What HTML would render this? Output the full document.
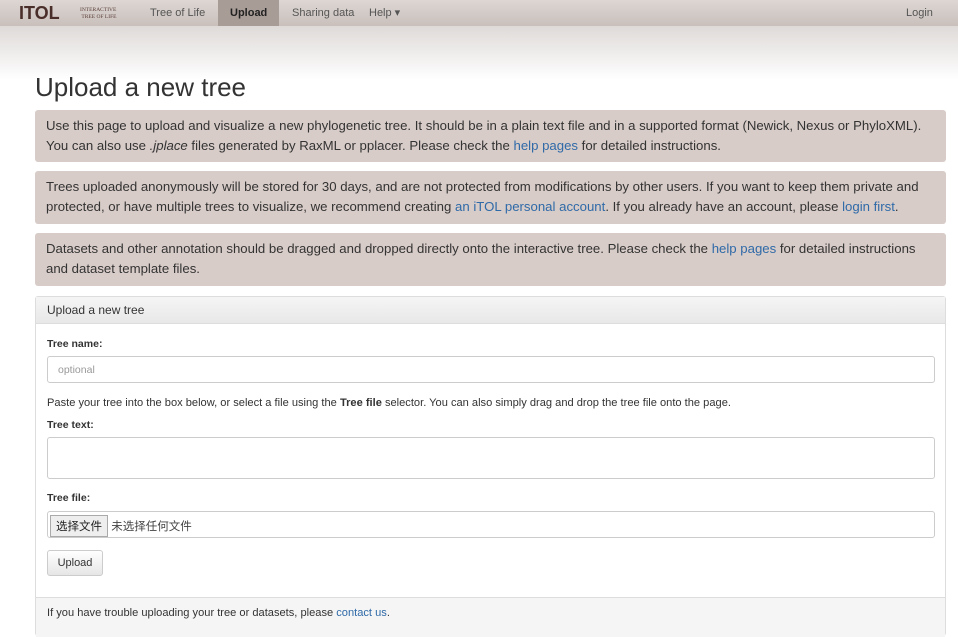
<!DOCTYPE html>
<html style="background:#fff"><head><meta charset="utf-8"><style>
*{box-sizing:border-box}
body{margin:0;width:958px;height:627px;overflow:hidden;font-family:"Liberation Sans","Noto Sans CJK SC",sans-serif;color:#333;background:linear-gradient(#dedad8 26px,#ffffff 80px,#fff);}
.nav{height:26px;background:linear-gradient(#ddd6d2,#c9c0bc);position:relative;font-size:11px;}
.nav span{position:absolute;top:0;line-height:26px;color:#555}
.logo{left:19px;font-family:"Liberation Sans",sans-serif;font-weight:bold;font-size:18px;color:#4a2e2a!important;}
.logo2{left:80px;font-size:5.5px!important;line-height:7px!important;top:7px!important;font-family:"Liberation Serif",serif;color:#5a3d38!important}
.act{background:#a89c97;color:#222!important;font-weight:bold;padding:0 12px;left:218px}
h1{position:absolute;left:35px;top:72px;margin:0;font-weight:normal;font-size:26px;color:#333}
.alert{position:absolute;left:35px;width:911px;background:#d8ccc8;border-radius:3px;font-size:13.2px;line-height:20px;padding:6px 11px;color:#333}
a{color:#2f6aa8;text-decoration:none}
.panel{position:absolute;left:35px;top:296px;width:911px;height:340px;border:1px solid #ddd;border-radius:3px;background:#fff}
.ph{height:27px;background:linear-gradient(#f5f5f5,#e8e8e8);border-bottom:1px solid #ddd;font-size:12px;line-height:26px;padding-left:11px}
.lbl{position:absolute;left:11px;font-size:10.5px;font-weight:bold;color:#333}
.inp{position:absolute;left:11px;width:888px;border:1px solid #ccc;border-radius:3px;background:#fff}
.txt{position:absolute;left:11px;font-size:11.1px;color:#333;white-space:nowrap}
.foot{position:absolute;left:0;top:300px;width:909px;height:40px;background:#f5f5f5;border-top:1px solid #ddd;font-size:11.1px;padding:9px 11px}
</style></head><body>
<div class="nav">
<span class="logo">ITOL</span>
<span class="logo2">INTERACTIVE<br>&nbsp;TREE OF LIFE</span>
<span style="left:150px">Tree of Life</span>
<span class="act">Upload</span>
<span style="left:292px">Sharing data</span>
<span style="left:369px">Help ▾</span>
<span style="left:906px">Login</span>
</div>
<h1>Upload a new tree</h1>
<div class="alert" style="top:110px;height:52px">Use this page to upload and visualize a new phylogenetic tree. It should be in a plain text file and in a supported format (Newick, Nexus or PhyloXML). You can also use <i>.jplace</i> files generated by RaxML or pplacer. Please check the <a>help pages</a> for detailed instructions.</div>
<div class="alert" style="top:171px;height:53px">Trees uploaded anonymously will be stored for 30 days, and are not protected from modifications by other users. If you want to keep them private and protected, or have multiple trees to visualize, we recommend creating <a>an iTOL personal account</a>. If you already have an account, please <a>login first</a>.</div>
<div class="alert" style="top:233px;height:53px">Datasets and other annotation should be dragged and dropped directly onto the interactive tree. Please check the <a>help pages</a> for detailed instructions and dataset template files.</div>
<div class="panel">
<div class="ph">Upload a new tree</div>
<div class="lbl" style="top:41px">Tree name:</div>
<div class="inp" style="top:59px;height:27px;font-size:10.5px;color:#999;padding:7px 10px">optional</div>
<div class="txt" style="top:100px">Paste your tree into the box below, or select a file using the <b>Tree file</b> selector. You can also simply drag and drop the tree file onto the page.</div>
<div class="lbl" style="top:122px">Tree text:</div>
<div class="inp" style="top:140px;height:42px"></div>
<div class="lbl" style="top:195px">Tree file:</div>
<div class="inp" style="top:214px;height:27px;font-size:11.5px;padding:3px 0 0 2px"><span style="display:inline-block;background:#eee;border:1px solid #aaa;padding:2px 5px;color:#222">选择文件</span> <span style="color:#444">未选择任何文件</span></div>
<div style="position:absolute;left:11px;top:253px;width:56px;height:26px;border:1px solid #ccc;border-radius:3px;background:linear-gradient(#fff,#e6e6e6);font-size:11px;text-align:center;line-height:24px">Upload</div>
<div class="foot">If you have trouble uploading your tree or datasets, please <a>contact us</a>.</div>
</div>
</body></html>
